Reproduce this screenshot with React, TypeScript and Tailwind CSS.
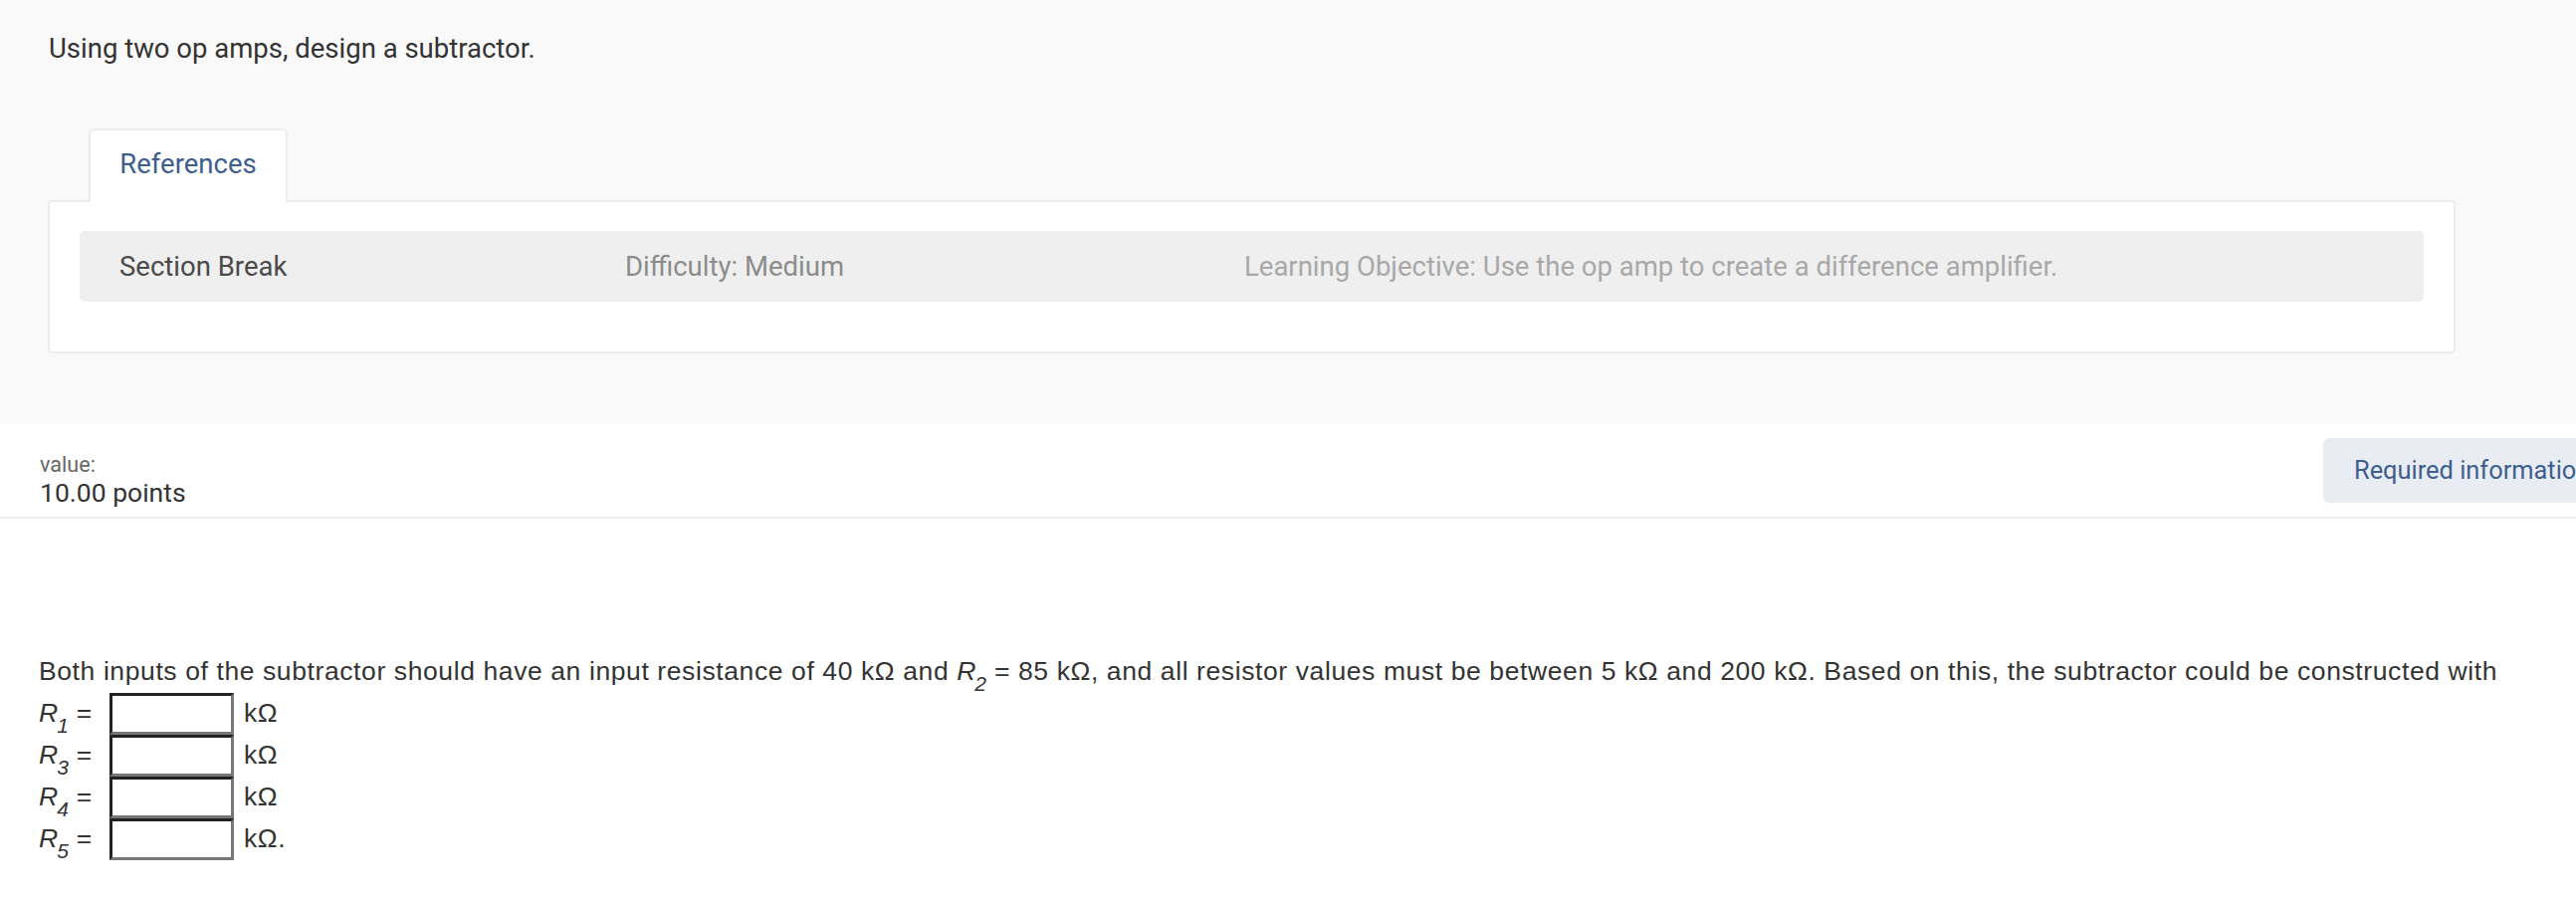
import React from 'react';

const rows = [
  { sub: '1', unit: 'kΩ' },
  { sub: '3', unit: 'kΩ' },
  { sub: '4', unit: 'kΩ' },
  { sub: '5', unit: 'kΩ.' },
];

// italic R with a lowered italic index, as the question text renders it
function R({ n }: { n: string }) {
  return (
    <span className="tracking-normal">
      <i>R</i>
      <sub className="-ml-[1px] bottom-[-0.5em] text-[21px] italic">{n}</sub>
    </span>
  );
}

export default function App() {
  return (
    <div className="h-[906px] w-[2588px] overflow-hidden bg-white font-['Roboto',sans-serif] text-[#333]">
      {/* prompt + references tab */}
      <section className="h-[425px] bg-[#f9f9f9] pl-[48px] pr-[121px] pt-[31px]">
        <p className="pl-px text-[27.5px] leading-[36px] text-[#333]">Using two op amps, design a subtractor.</p>

        <div className="mt-[62px] flex pl-[41px]">
          <div className="relative z-10 -mb-[2px] h-[74px] w-[200px] rounded-t-[6px] border-2 border-b-0 border-[#ececec] bg-white pt-[16px] text-center text-[27.5px] leading-[36px] text-[#3d5e8f]">
            References
          </div>
        </div>
        <div className="rounded-[4px] border-2 border-[#ececec] bg-white px-[30px] pb-[50px] pt-[29px]">
          <div className="flex h-[71px] items-center rounded-[5px] bg-[#efefef] pl-[40px] text-[27.5px] leading-[36px]">
            <span className="w-[508px] shrink-0 text-[#4a4a4a]">Section Break</span>
            <span className="w-[622px] shrink-0 text-[#8c8c8c]">Difficulty: Medium</span>
            <span className="whitespace-nowrap text-[#a8a8a8]">
              Learning Objective: Use the op amp to create a difference amplifier.
            </span>
          </div>
        </div>
      </section>

      {/* value row */}
      <section className="flex h-[96px] border-b-2 border-[#ececec] pl-[40px]">
        <div className="flex-1 pt-[29px]">
          <div className="text-[21.6px] leading-[26px] text-[#666]">value:</div>
          <div className="text-[26.5px] leading-[30px] text-[#333]">10.00 points</div>
        </div>
        <div className="w-[254px] shrink-0 pt-[15px]">
          <button className="flex h-[65px] w-[320px] items-center whitespace-nowrap rounded-[6px] bg-[#e9edf3] pl-[31px] text-[25.4px] text-[#3d5e8f]">
            Required information
          </button>
        </div>
      </section>

      {/* question body */}
      <section className="pl-[39px] pt-[137px] font-['Liberation_Sans',Arial,sans-serif] text-[26.5px] tracking-[0.6px] text-[#333]">
        <p className="whitespace-nowrap leading-[32px]">
          Both inputs of the subtractor should have an input resistance of 40 kΩ and <R n="2" /> = 85 kΩ, and all
          resistor values must be between 5 kΩ and 200 kΩ. Based on this, the subtractor could be constructed with
        </p>
        <div className="mt-[6px]">
          {rows.map((r) => (
            <div key={r.sub} className="flex h-[42px] items-center">
              <span className="w-[71px] shrink-0 whitespace-nowrap">
                <R n={r.sub} /> =
              </span>
              <input
                type="text"
                className="h-[42px] w-[125px] shrink-0 border-[3px] border-b-[#777] border-l-[#222] border-r-[#777] border-t-[#222] bg-white outline-none"
              />
              <span className="ml-[10px]">{r.unit}</span>
            </div>
          ))}
        </div>
      </section>
    </div>
  );
}
